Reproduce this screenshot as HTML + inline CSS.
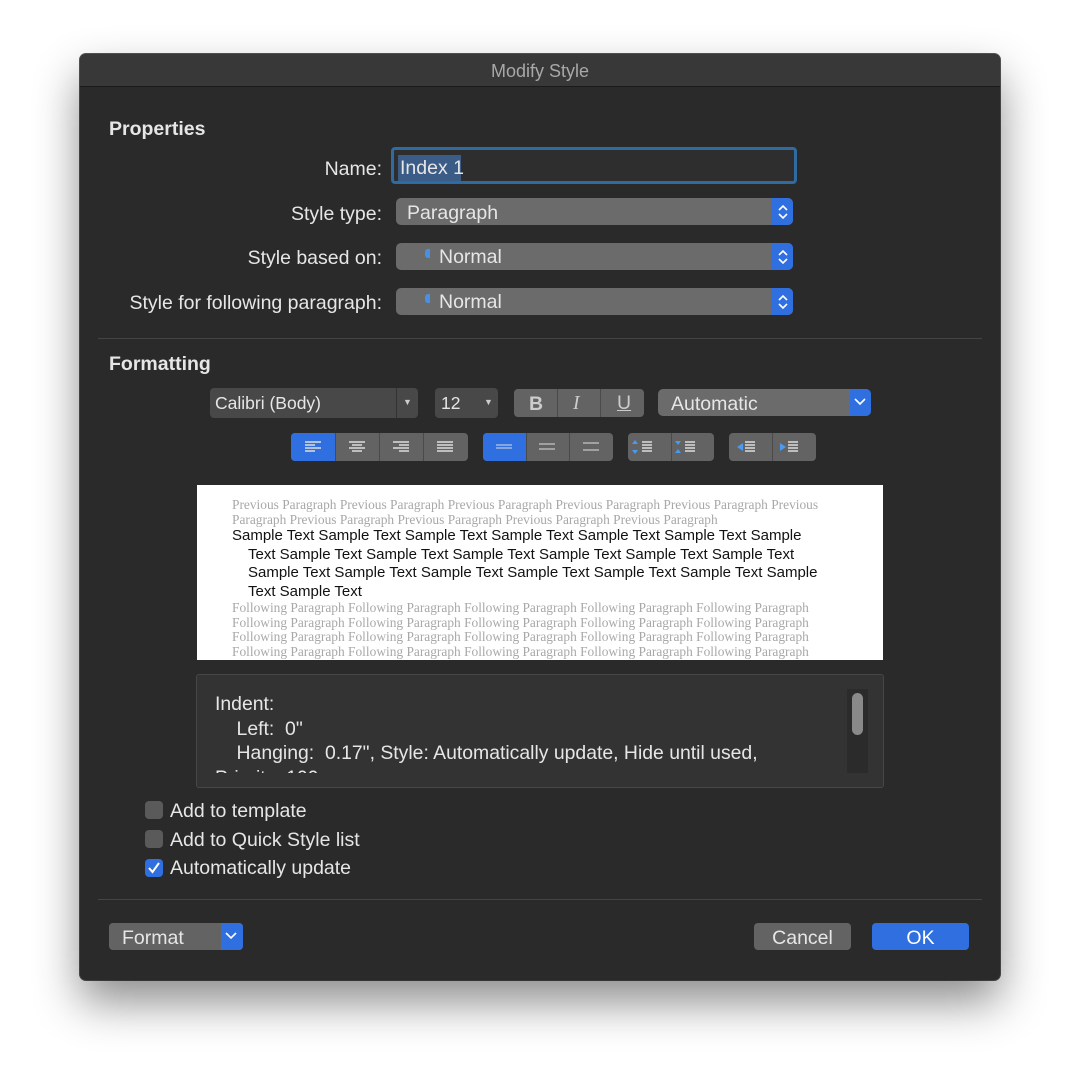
<!DOCTYPE html>
<html><head><meta charset="utf-8"><style>
body{margin:0;width:1080px;height:1087px;background:#fff;position:relative;overflow:hidden;font-family:"Liberation Sans",sans-serif;color:#e6e6e6}
.a{position:absolute}
#dlg{left:80px;top:54px;width:920px;height:926px;background:#2a2a2a;border-radius:6px;box-shadow:0 22px 45px rgba(0,0,0,.45),0 0 0 1px #555;}
.t{font-size:19.5px;white-space:nowrap}
.lbl{font-size:19.5px;text-align:right;width:300px;left:82px}
.pop{background:#6b6b6b;border-radius:5px;height:27px}
.st{position:absolute;right:0;top:0;width:22px;height:27px;background:#2f6fe0;border-radius:0 5px 5px 0}
.btn{background:#636363;border-radius:4px;height:28px}
.seg{position:absolute;top:0;height:28px;border-right:1px solid #4a4a4a}
.b{background:#2f6fe0}
.cb{width:18px;height:18px;border-radius:4px;background:#5a5a5a;left:145px}
.pv{font-family:"Liberation Serif",serif;font-size:13.4px;color:#a8a8a8;line-height:14.5px}
</style></head><body>
<div id="dlg" class="a"></div>
<div class="a" style="left:80px;top:54px;width:920px;height:32px;background:#383838;border-radius:6px 6px 0 0;border-bottom:1px solid #1a1a1a"></div>
<div class="a" style="left:0;width:1080px;text-align:center;top:61px;color:#a8a8a8;font-size:18px">Modify Style</div>

<div class="a t" style="left:109px;top:118px;font-weight:bold">Properties</div>
<div class="a lbl" style="top:158px">Name:</div>
<div class="a lbl" style="top:203px">Style type:</div>
<div class="a lbl" style="top:247px">Style based on:</div>
<div class="a lbl" style="top:292px">Style for following paragraph:</div>

<div class="a" style="border:3px solid #2f6aa0;border-radius:4px;background:#2e2e2e;width:400px;height:31px;left:391px;top:147px"></div>
<div class="a" style="left:398px;top:155px;width:63px;height:26px;background:#3b5c86"></div>
<div class="a t" style="left:400px;top:157px">Index 1</div>

<div class="a pop" style="left:396px;top:198px;width:397px"><div class="st"></div></div>
<div class="a t" style="left:407px;top:202px">Paragraph</div>
<div class="a pop" style="left:396px;top:243px;width:397px"><div class="st"></div></div>
<div class="a" style="left:425px;top:249px;width:5px;height:9px;background:#4a8fe0;border-radius:3px 0 0 3px"></div>
<div class="a t" style="left:439px;top:246px">Normal</div>
<div class="a pop" style="left:396px;top:288px;width:397px"><div class="st"></div></div>
<div class="a" style="left:425px;top:294px;width:5px;height:9px;background:#4a8fe0;border-radius:3px 0 0 3px"></div>
<div class="a t" style="left:439px;top:291px">Normal</div>
<svg class="a" style="left:774px;top:198px" width="18" height="120"><g fill="none" stroke="#fff" stroke-width="1.6"><path d="M5 12l4-4 4 4M5 16l4 4 4-4"/><path d="M5 57l4-4 4 4M5 61l4 4 4-4"/><path d="M5 102l4-4 4 4M5 106l4 4 4-4"/></g></svg>

<div class="a" style="left:98px;top:338px;width:884px;height:1px;background:#444"></div>
<div class="a t" style="left:109px;top:353px;font-weight:bold">Formatting</div>

<div class="a btn" style="left:210px;top:388px;width:208px;height:30px;background:#484848"><div class="seg" style="left:186px;height:30px;border-left:1px solid #333;border-right:0"></div></div>
<div class="a t" style="left:215px;top:393px;font-size:17.5px">Calibri (Body)</div>
<div class="a" style="left:403px;top:397px;font-size:9px;color:#ccc">▼</div>
<div class="a btn" style="left:435px;top:388px;width:63px;height:30px;background:#484848"></div>
<div class="a t" style="left:441px;top:393px;font-size:17.5px">12</div>
<div class="a" style="left:484px;top:397px;font-size:9px;color:#ccc">▼</div>
<div class="a btn" style="left:514px;top:389px;width:130px"><div class="seg" style="left:0;width:43px"></div><div class="seg" style="left:43px;width:43px"></div></div>
<div class="a t" style="left:529px;top:393px;font-weight:bold;color:#ccc">B</div>
<div class="a t" style="left:573px;top:393px;font-style:italic;font-family:'Liberation Serif',serif;color:#ccc">I</div>
<div class="a t" style="left:617px;top:392px;text-decoration:underline;color:#ccc">U</div>
<div class="a pop" style="left:658px;top:389px;width:213px;height:27px"><div class="st" style="width:21px"></div></div>
<div class="a t" style="left:671px;top:393px">Automatic</div>
<svg class="a" style="left:852px;top:396px" width="16" height="12"><path d="M3 3l5 5 5-5" fill="none" stroke="#fff" stroke-width="1.6"/></svg>

<div class="a btn" style="left:291px;top:433px;width:177px;height:28px;overflow:hidden"><div class="seg b" style="left:0;width:44px"></div><div class="seg" style="left:44px;width:44px"></div><div class="seg" style="left:88px;width:44px"></div></div>
<div class="a btn" style="left:483px;top:433px;width:130px;height:28px;overflow:hidden"><div class="seg b" style="left:0;width:43px"></div><div class="seg" style="left:43px;width:43px"></div></div>
<div class="a btn" style="left:628px;top:433px;width:86px;height:28px;overflow:hidden"><div class="seg" style="left:0;width:43px"></div></div>
<div class="a btn" style="left:729px;top:433px;width:87px;height:28px;overflow:hidden"><div class="seg" style="left:0;width:43px"></div></div>
<svg class="a" style="left:290px;top:433px" width="530" height="28"><g stroke="#ddd" stroke-width="1.4">
<path d="M15 9h16M15 12h10M15 15h16M15 18h10"/>
<path d="M59 9h16M62 12h10M59 15h16M62 18h10"/>
<path d="M103 9h16M109 12h10M103 15h16M109 18h10"/>
<path d="M147 9h16M147 12h16M147 15h16M147 18h16"/>
<path d="M206 12h16M206 15h16" stroke-width="1"/>
<path d="M249 11h16M249 16h16" stroke-width="1"/>
<path d="M293 10h16M293 17h16" stroke-width="1"/>
<path d="M352 9h10M352 12h10M352 15h10M352 18h10M395 9h10M395 12h10M395 15h10M395 18h10"/>
<path d="M455 9h10M455 12h10M455 15h10M455 18h10M498 9h10M498 12h10M498 15h10M498 18h10"/>
</g><g fill="#4a9af0"><path d="M348 11l-3 -4-3 4zM342 17l3 4 3-4z"/><path d="M391 8l-3 4-3-4zM385 20l3-4 3 4z"/><path d="M447 14l6-4v8z"/><path d="M496 14l-6-4v8z"/></g></svg>

<div class="a" style="left:197px;top:485px;width:686px;height:175px;background:#fff;overflow:hidden">
<div class="a pv" style="left:35px;top:13px;width:600px">Previous Paragraph Previous Paragraph Previous Paragraph Previous Paragraph Previous Paragraph Previous Paragraph Previous Paragraph Previous Paragraph Previous Paragraph Previous Paragraph</div>
<div class="a" style="left:35px;top:42px;width:575px;font-size:15px;line-height:18.5px;color:#111;padding-left:16px;text-indent:-16px">Sample Text Sample Text Sample Text Sample Text Sample Text Sample Text Sample Text Sample Text Sample Text Sample Text Sample Text Sample Text Sample Text Sample Text Sample Text Sample Text Sample Text Sample Text Sample Text Sample Text Sample Text</div>
<div class="a pv" style="left:35px;top:116px;width:600px">Following Paragraph Following Paragraph Following Paragraph Following Paragraph Following Paragraph Following Paragraph Following Paragraph Following Paragraph Following Paragraph Following Paragraph Following Paragraph Following Paragraph Following Paragraph Following Paragraph Following Paragraph Following Paragraph Following Paragraph Following Paragraph Following Paragraph Following Paragraph Following Paragraph Following Paragraph Following Paragraph Following Paragraph</div>
</div>

<div class="a" style="left:196px;top:674px;width:686px;height:112px;background:#333;border:1px solid #474747;border-radius:3px;overflow:hidden">
<div class="a" style="left:0;top:0;width:686px;height:98px;overflow:hidden">
<div class="a t" style="left:18px;top:17px;line-height:24.5px;font-size:19.4px">Indent:<br>&nbsp;&nbsp;&nbsp;&nbsp;Left:&nbsp; 0"<br>&nbsp;&nbsp;&nbsp;&nbsp;Hanging:&nbsp; 0.17", Style: Automatically update, Hide until used,<br>Priority: 100</div>
</div>
<div class="a" style="left:650px;top:14px;width:21px;height:84px;background:#2b2b2b"></div>
<div class="a" style="left:655px;top:18px;width:11px;height:42px;background:#8a8a8a;border-radius:6px"></div>
</div>

<div class="a cb" style="top:801px"></div><div class="a t" style="left:170px;top:800px">Add to template</div>
<div class="a cb" style="top:830px"></div><div class="a t" style="left:170px;top:829px">Add to Quick Style list</div>
<div class="a cb" style="top:859px;background:#2f6fe0"></div>
<svg class="a" style="left:145px;top:859px" width="18" height="18"><path d="M4 9l3.5 4L14 4" fill="none" stroke="#fff" stroke-width="2"/></svg>
<div class="a t" style="left:170px;top:857px">Automatically update</div>

<div class="a" style="left:98px;top:899px;width:884px;height:1px;background:#444"></div>
<div class="a btn" style="left:109px;top:923px;width:134px;height:27px;overflow:hidden"><div class="seg b" style="left:112px;width:22px;border:0;height:27px"></div></div>
<svg class="a" style="left:223px;top:930px" width="16" height="12"><path d="M3 3l5 5 5-5" fill="none" stroke="#fff" stroke-width="1.6"/></svg>
<div class="a t" style="left:122px;top:927px">Format</div>
<div class="a btn" style="left:754px;top:923px;width:97px;height:27px"></div>
<div class="a t" style="left:754px;width:97px;text-align:center;top:927px">Cancel</div>
<div class="a btn b" style="left:872px;top:923px;width:97px;height:27px"></div>
<div class="a t" style="left:872px;width:97px;text-align:center;top:927px;color:#fff">OK</div>
</body></html>
